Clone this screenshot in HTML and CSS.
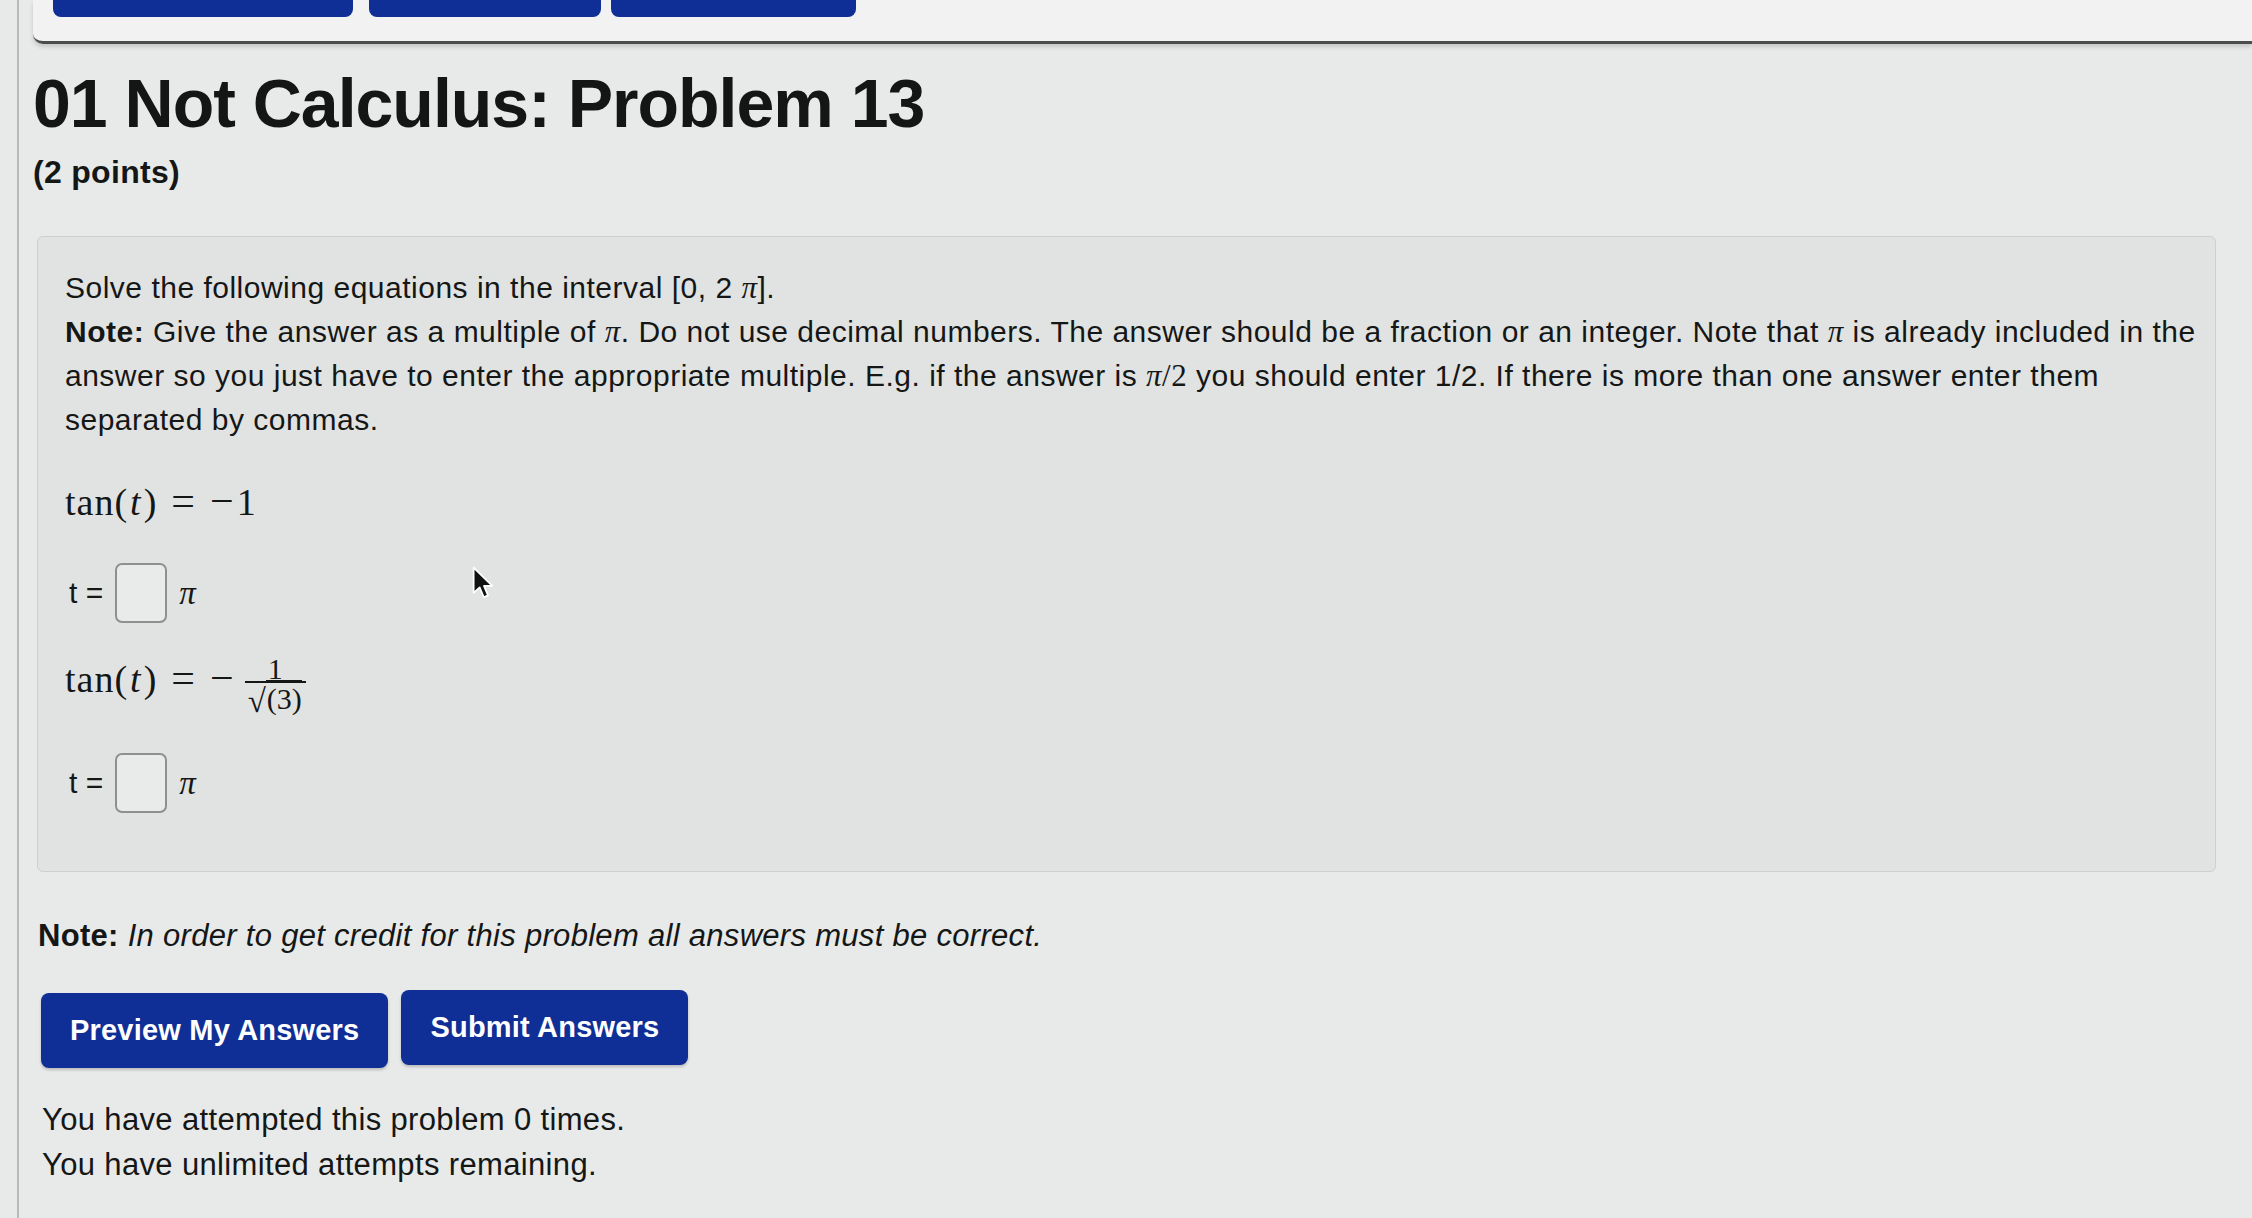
FILE: index.html
```html
<!DOCTYPE html>
<html lang="en">
<head>
    <meta charset="UTF-8">
    <meta name="viewport" content="width=device-width, initial-scale=1.0">
    <title>01 Not Calculus: Problem 13</title>
    <link rel="stylesheet" href="styles.css">
</head>
<body>
    <div class="page">
        <!-- problem navigation (cut off at the top) -->
        <div class="topbar">
            <span class="nav-btn nav-prev"></span>
            <span class="nav-btn nav-list"></span>
            <span class="nav-btn nav-next"></span>
        </div>

        <div class="problem">
            <h1 class="title">01 Not Calculus: Problem 13</h1>
            <div class="points">(2 points)</div>

            <div class="problem-box">
                <div class="statement">
                    Solve the following equations in the interval [0, 2 <span class="mi">π</span>].<br>
                    <b>Note:</b> Give the answer as a multiple of <span class="mi">π</span>. Do not use decimal numbers. The answer should be a fraction or an integer. Note that <span class="mi">π</span> is already included in the answer so you just have to enter the appropriate multiple. E.g. if the answer is <span class="mi">π</span><span class="mn">/2</span> you should enter 1/2. If there is more than one answer enter them separated by commas.
                </div>

                <div class="eq eq-first">
                    <span class="mn">tan</span><span class="mn">(</span><span class="mi">t</span><span class="mn">)</span><span class="mo">=</span><span class="mn neg">−</span><span class="mn">1</span>
                </div>

                <div class="answer-row">
                    <span class="lbl">t =</span>
                    <input class="ans" type="text">
                    <span class="mi pi">π</span>
                </div>

                <div class="eq eq-frac">
                    <span class="mn">tan</span><span class="mn">(</span><span class="mi">t</span><span class="mn">)</span><span class="mo">=</span><span class="mn neg">−</span><span class="frac"><span class="num">1</span><span class="den"><span class="surd">√</span><span class="radicand">(3)</span></span></span>
                </div>

                <div class="answer-row">
                    <span class="lbl">t =</span>
                    <input class="ans" type="text">
                    <span class="mi pi">π</span>
                </div>

                <svg class="cursor" width="23" height="34" viewBox="0 0 21 31">
                    <path d="M1.5 1.5 L1.5 24.5 L7 19.5 L10.8 28.5 L14.6 26.8 L10.9 18.2 L18.5 18.2 Z" fill="#111" stroke="#fff" stroke-width="1.6" stroke-linejoin="round"/>
                </svg>
            </div>

            <p class="note"><b>Note:</b> <i>In order to get credit for this problem all answers must be correct.</i></p>

            <div class="actions">
                <button class="btn btn-preview">Preview My Answers</button>
                <button class="btn btn-submit">Submit Answers</button>
            </div>

            <p class="attempts">
                You have attempted this problem 0 times.<br>
                You have unlimited attempts remaining.
            </p>
        </div>
    </div>
</body>
</html>
```

FILE: styles.css
```css
* {
    box-sizing: border-box;
}

body {
    margin: 0;
    background: #e8eae9;
    color: #151716;
    font-family: "Liberation Sans", Arial, sans-serif;
}

.page {
    margin-left: 17px;
    border-left: 2px solid #b7bab9;
    min-height: 100vh;
}

/* 顶部导航 */
.topbar {
    height: 44px;
    margin-left: 14px;
    padding-left: 20px;
    display: flex;
    align-items: flex-start;
    background: #f1f2f1;
    border-bottom: 3px solid #4b4d4d;
    border-bottom-left-radius: 10px;
    box-shadow: 0 3px 4px rgba(0,0,0,0.15);
}
.nav-btn {
    height: 17px;
    background: #0f2f96;
    border-radius: 0 0 8px 8px;
}
.nav-prev { width: 300px; }
.nav-list { width: 232px; margin-left: 16px; }
.nav-next { width: 245px; margin-left: 10px; }

/* 题目 */
.problem {
    padding: 0 36px 0 14px;
}
.title {
    margin: 17px 0 0;
    font-size: 68px;
    line-height: 84px;
    font-weight: bold;
    letter-spacing: -1px;
    color: #141615;
}
.points {
    margin-top: 9px;
    font-size: 32px;
    line-height: 36px;
    font-weight: bold;
    letter-spacing: 0.3px;
}

.problem-box {
    position: relative;
    margin: 46px 0 0 4px;
    padding: 29px 8px 56px 27px;
    height: 636px;
    background: #e1e3e2;
    border: 1px solid #cdd0cf;
    border-radius: 6px;
}
.statement {
    font-size: 30px;
    line-height: 44px;
    letter-spacing: 0.5px;
}

/* 公式 */
.mi, .mn, .mo {
    font-family: "Liberation Serif", "Times New Roman", serif;
}
.mi {
    font-style: italic;
}
.statement .mi, .statement .mn {
    font-size: 31px;
}
.eq {
    font-family: "Liberation Serif", "Times New Roman", serif;
    font-size: 38px;
    letter-spacing: 1px;
    white-space: nowrap;
}
.eq-first {
    margin-top: 34px;
    height: 50px;
    line-height: 50px;
}
.eq-frac {
    margin-top: 23px;
    height: 64px;
    line-height: 64px;
}
.eq .mi {
    margin: 0 2px;
}
.eq .mo {
    margin: 0 14px 0 14px;
    font-size: 42px;
}
.eq .neg {
    font-size: 42px;
    margin-right: 2px;
}
.eq-frac .neg {
    margin-right: 10px;
}
.frac {
    display: inline-flex;
    flex-direction: column;
    align-items: center;
    vertical-align: 13px;
    font-size: 30px;
    line-height: 25px;
    letter-spacing: 0;
}
.num {
    display: block;
    padding: 0 4px;
}
.den {
    display: block;
    border-top: 2px solid #151716;
    padding: 2px 4px 0 3px;
    line-height: 28px;
}
.surd {
    font-size: 33px;
    vertical-align: -3px;
}
.radicand {
    border-top: 2px solid #151716;
    padding-left: 1px;
}

.answer-row {
    margin-top: 37px;
    height: 60px;
    display: flex;
    align-items: center;
    padding-left: 4px;
    font-size: 30px;
}
.eq-frac + .answer-row {
    margin-top: 43px;
}
.lbl {
    margin-right: 12px;
}
.ans {
    width: 52px;
    height: 60px;
    padding: 0;
    background: #e9ebea;
    border: 2px solid #8d908f;
    border-radius: 7px;
}
.pi {
    margin-left: 12px;
    font-size: 33px;
}

.cursor {
    position: absolute;
    left: 434px;
    top: 329px;
}

/* 提示与按钮 */
.note {
    margin: 43px 0 0 5px;
    font-size: 31px;
    line-height: 42px;
    letter-spacing: 0.3px;
}
.actions {
    margin: 36px 0 0 8px;
    display: flex;
    align-items: center;
    gap: 13px;
}
.btn {
    height: 75px;
    padding: 0 29px;
    border: none;
    border-radius: 8px;
    background: #0f2f96;
    color: #fff;
    font-family: "Liberation Sans", Arial, sans-serif;
    font-size: 29px;
    font-weight: bold;
    letter-spacing: 0.2px;
    box-shadow: 0 2px 3px rgba(0,0,0,0.2);
}
.btn-submit {
    margin-top: -6px;
}
.attempts {
    margin: 29px 0 0 9px;
    font-size: 31px;
    line-height: 45px;
    letter-spacing: 0.35px;
}
```
